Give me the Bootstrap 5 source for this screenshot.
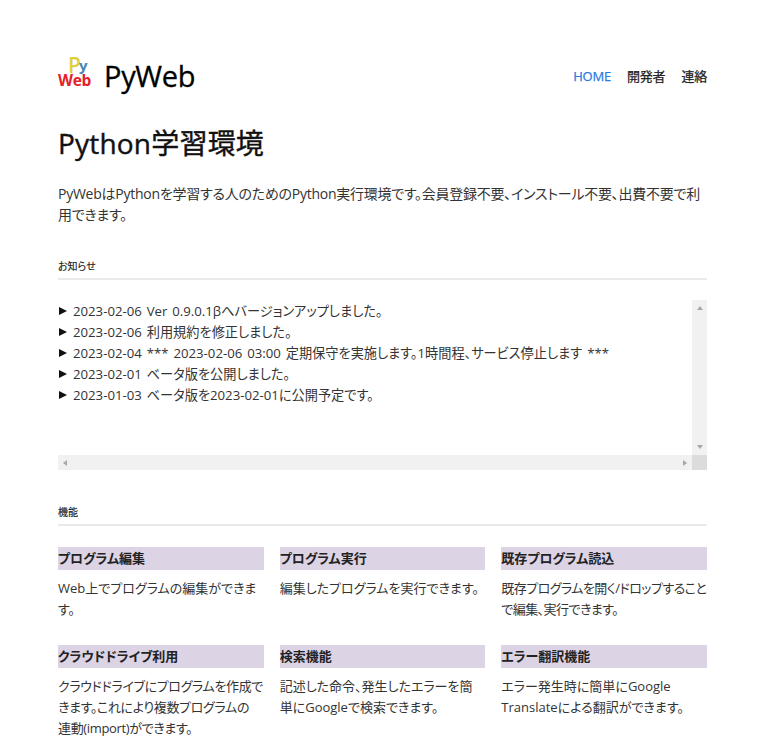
<!DOCTYPE html>
<html lang="ja">
<head>
<meta charset="utf-8">
<title>PyWeb</title>
<link href="https://cdn.jsdelivr.net/npm/bootstrap@5.3.0/dist/css/bootstrap.min.css" rel="stylesheet">
<style>
body{font-family:"Open Sans","Noto Sans CJK JP",sans-serif;font-feature-settings:"palt";font-size:14px;line-height:21px;color:#333;background:#fff;}
.pw-page{padding:48px 61px 0 58px;}
.pw-brand{gap:12px;color:#000;font-size:29px;line-height:40px;-webkit-text-stroke:.3px #000;letter-spacing:-.3px;}
.pw-logo{width:34px;height:34px;display:block;overflow:visible;}
.pw-head{height:56px;}
.pw-nav{gap:16px;font-size:13px;-webkit-text-stroke:.25px currentColor;letter-spacing:-.2px;}
.pw-nav a{color:#222;text-decoration:none;}
.pw-nav a.pw-on{color:#2a7ae2;}
.pw-title{font-size:28px;line-height:36px;font-weight:400;letter-spacing:.2px;-webkit-text-stroke:.4px #111;color:#111;margin:21px 0 22px;}
.pw-intro{margin:0 0 34px;letter-spacing:-.25px;}
.pw-section{font-size:10px;line-height:14px;font-weight:400;-webkit-text-stroke:.15px #222;color:#222;padding-bottom:5px;border-bottom:2px solid #eaeaea;margin:0 0 20px;}
.pw-news{display:grid;grid-template-columns:1fr 15px;grid-template-rows:155px 15px;margin-bottom:35px;font-size:13.2px;word-spacing:1.5px;}
.pw-news ul{list-style:none;margin:0;padding:1px 0 0;overflow:hidden;}
.pw-news li{padding-left:15px;position:relative;white-space:nowrap;}
.pw-news li::before{content:"";position:absolute;left:1px;top:6px;border-left:8px solid #111;border-top:4.5px solid transparent;border-bottom:4.5px solid transparent;}
.pw-bar{background:#f1f1f1;padding:6px 5px;}
.pw-corner{background:#dcdcdc;}
.pw-arrow{display:block;width:0;height:0;border-style:solid;border-color:transparent;}
.pw-up{border-width:0 3.5px 4px;border-bottom-color:#a8a8a8;}
.pw-down{border-width:4px 3.5px 0;border-top-color:#a8a8a8;}
.pw-left{border-width:3.5px 4px 3.5px 0;border-right-color:#a8a8a8;}
.pw-right{border-width:3.5px 0 3.5px 4px;border-left-color:#a8a8a8;}
.pw-feats{padding-top:1px;}
.pw-feat{margin-bottom:25px;}
.pw-feat h3{background:#dcd3e5;font-size:13px;line-height:23px;font-weight:700;color:#222;margin:0 0 8px;}
.pw-feat p{margin:0;font-size:13px;}
.pw-feat p.pw-tight{letter-spacing:-.55px;}
.pw-feat p.pw-snug{letter-spacing:-.35px;}
</style>
</head>
<body>
<div class="pw-page">
  <header class="pw-head d-flex align-items-center justify-content-between">
    <div class="pw-brand d-flex align-items-center">
      <svg class="pw-logo" viewBox="0 0 34 34" role="img" aria-label="PyWeb">
        <text x="10" y="14" font-family="'Open Sans',sans-serif" font-size="21" font-weight="600" fill="#e0cf3c" stroke="none">P</text>
        <text x="21" y="12" font-family="'Open Sans',sans-serif" font-size="15" font-weight="700" fill="#4a86b8" stroke="none">y</text>
        <text x="0" y="27" font-family="'Open Sans',sans-serif" font-size="15.5" font-weight="700" fill="#e5202a" stroke="none">Web</text>
      </svg>
      <span>PyWeb</span>
    </div>
    <nav class="pw-nav d-flex">
      <a class="pw-on" href="#">HOME</a>
      <a href="#">開発者</a>
      <a href="#">連絡</a>
    </nav>
  </header>
  <h1 class="pw-title">Python学習環境</h1>
  <p class="pw-intro">PyWebはPythonを学習する人のためのPython実行環境です。会員登録不要、インストール不要、出費不要で利用できます。</p>
  <h2 class="pw-section">お知らせ</h2>
  <div class="pw-news">
    <ul>
      <li>2023-02-06 Ver 0.9.0.1βへバージョンアップしました。</li>
      <li>2023-02-06 利用規約を修正しました。</li>
      <li>2023-02-04 *** 2023-02-06 03:00 定期保守を実施します。1時間程、サービス停止します ***</li>
      <li>2023-02-01 ベータ版を公開しました。</li>
      <li>2023-01-03 ベータ版を2023-02-01に公開予定です。</li>
    </ul>
    <div class="pw-bar d-flex flex-column align-items-center justify-content-between"><span class="pw-arrow pw-up"></span><span class="pw-arrow pw-down"></span></div>
    <div class="pw-bar d-flex align-items-center justify-content-between"><span class="pw-arrow pw-left"></span><span class="pw-arrow pw-right"></span></div>
    <div class="pw-corner"></div>
  </div>
  <h2 class="pw-section">機能</h2>
  <div class="row row-cols-3 gx-3 pw-feats">
    <div class="col pw-feat"><h3>プログラム編集</h3><p class="text-nowrap">Web上でプログラムの編集ができま<br>す。</p></div>
    <div class="col pw-feat"><h3>プログラム実行</h3><p>編集したプログラムを実行できます。</p></div>
    <div class="col pw-feat"><h3>既存プログラム読込</h3><p class="text-nowrap pw-tight">既存プログラムを開く/ドロップすること<br>で編集、実行できます。</p></div>
    <div class="col pw-feat"><h3>クラウドドライブ利用</h3><p class="text-nowrap pw-snug">クラウドドライブにプログラムを作成で<br>きます。これにより複数プログラムの<br>連動(import)ができます。</p></div>
    <div class="col pw-feat"><h3>検索機能</h3><p>記述した命令、発生したエラーを簡単にGoogleで検索できます。</p></div>
    <div class="col pw-feat"><h3>エラー翻訳機能</h3><p>エラー発生時に簡単にGoogle Translateによる翻訳ができます。</p></div>
  </div>
</div>
<script src="https://cdn.jsdelivr.net/npm/bootstrap@5.3.0/dist/js/bootstrap.bundle.min.js"></script>
</body>
</html>
